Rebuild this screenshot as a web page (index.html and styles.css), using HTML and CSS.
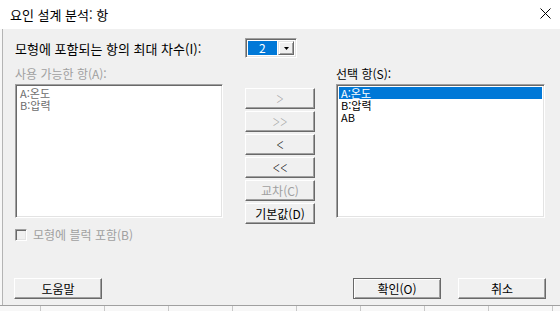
FILE: index.html
```html
<!DOCTYPE html>
<html lang="ko">
<head>
<meta charset="utf-8">
<link rel="stylesheet" href="styles.css">
</head>
<body>
<div class="dialog">
  <div class="titlebar">
    <span class="title">요인 설계 분석: 항</span>
    <svg class="close" width="11" height="11" viewBox="0 0 11 11"><path d="M0.5 0.5 L10.5 10.5 M10.5 0.5 L0.5 10.5" stroke="#000" stroke-width="1" fill="none"/></svg>
  </div>
  <div class="body">
    <div class="order-row">
      <span class="text">모형에 포함되는 항의 최대 차수(I):</span>
      <div class="combo">
        <span class="combo-value">2</span>
        <span class="combo-btn"><svg width="5" height="3" viewBox="0 0 5 3"><path d="M0 0 H5 L2.5 3 Z" fill="#000"/></svg></span>
      </div>
    </div>
    <div class="main">
      <div class="col-left">
        <div class="label disabled">사용 가능한 항(A):</div>
        <div class="listbox list-dim">
          <div class="item">A:온도</div>
          <div class="item">B:압력</div>
        </div>
        <div class="check">
          <span class="box"></span>
          <span class="disabled">모형에 블럭 포함(B)</span>
        </div>
      </div>
      <div class="col-mid">
        <div class="btn disabled"><span class="arrow">&gt;</span></div>
        <div class="btn disabled"><span class="arrow">&gt;&gt;</span></div>
        <div class="btn"><span class="arrow">&lt;</span></div>
        <div class="btn"><span class="arrow">&lt;&lt;</span></div>
        <div class="btn disabled">교차(C)</div>
        <div class="btn">기본값(D)</div>
      </div>
      <div class="col-right">
        <div class="label">선택 항(S):</div>
        <div class="listbox">
          <div class="item selected">A:온도</div>
          <div class="item">B:압력</div>
          <div class="item">AB</div>
        </div>
      </div>
    </div>
    <div class="footer">
      <div class="btn wide">도움말</div>
      <div class="spacer"></div>
      <div class="btn wide default">확인(O)</div>
      <div class="btn wide">취소</div>
    </div>
  </div>
</div>
</body>
</html>
```

FILE: styles.css
```css
html, body {
  margin: 0;
  padding: 0;
}
body {
  width: 560px;
  height: 311px;
  overflow: hidden;
  background-color: #f7f7f7;
  background-image: repeating-linear-gradient(to right, transparent 0, transparent 40px, #c8c8c8 40px, #c8c8c8 41px, transparent 41px, transparent 64px);
  font-family: "Noto Sans CJK KR", "Noto Sans", sans-serif;
  font-size: 12px;
  color: #000;
}
.dialog {
  width: 560px;
  height: 306px;
  display: flex;
  flex-direction: column;
  border-bottom: 1px solid #a0a0a0;
  box-sizing: border-box;
}
.titlebar {
  height: 29px;
  background: #fff;
  display: flex;
  align-items: center;
  padding: 0 9px 0 10px;
  flex: none;
}
.title {
  font-size: 13px;
  line-height: 15px;
  flex: 1;
  padding-bottom: 1px;
}
.close {
  display: block;
  margin-top: -2px;
}
.body {
  flex: 1;
  background: #f0f0f0;
  display: flex;
  flex-direction: column;
  padding: 9px 14px 6px 12px;
  border-left: 1px solid #b4b4b4;
  margin-left: 2px;
}
.order-row {
  display: grid;
  grid-template-columns: 230px auto;
  align-items: center;
  height: 20px;
}
.text {
  font-size: 13px;
  line-height: 15px;
  padding-top: 1px;
}
.combo {
  width: 52px;
  height: 20px;
  box-sizing: border-box;
  border: 1px solid;
  border-color: #a0a0a0 #fff #fff #a0a0a0;
  box-shadow: inset 1px 1px #696969, inset -1px -1px #e3e3e3;
  background: #fff;
  display: flex;
  padding: 2px;
}
.combo-value {
  flex: 1;
  background: #0078d7;
  color: #fff;
  line-height: 14px;
  padding-left: 11px;
  font-size: 12px;
  margin-right: 1px;
}
.combo-btn {
  width: 16px;
  box-sizing: border-box;
  background: #f0f0f0;
  border: 1px solid;
  border-color: #e3e3e3 #696969 #696969 #e3e3e3;
  box-shadow: inset 1px 1px #fff, inset -1px -1px #a0a0a0;
  display: flex;
  align-items: center;
  justify-content: center;
}
.combo-btn svg {
  display: block;
}
.main {
  display: flex;
  margin-top: 9px;
}
.col-left {
  width: 208px;
  display: flex;
  flex-direction: column;
}
.col-mid {
  width: 70px;
  margin-left: 22px;
  padding-top: 21px;
  display: flex;
  flex-direction: column;
  gap: 2px;
}
.col-right {
  width: 209px;
  margin-left: 21px;
  display: flex;
  flex-direction: column;
}
.label {
  line-height: 14px;
  height: 14px;
  margin-bottom: 3px;
}
.disabled {
  color: #a0a0a0;
}
.listbox {
  height: 134px;
  box-sizing: border-box;
  border: 1px solid;
  border-color: #a0a0a0 #fff #fff #a0a0a0;
  box-shadow: inset 1px 1px #696969, inset -1px -1px #e3e3e3;
  background: #fff;
  padding: 2px 2px 1px 2px;
}
.item {
  height: 12px;
  line-height: 12px;
  font-size: 11px;
  padding-left: 2px;
  white-space: nowrap;
}
.list-dim .item {
  color: #6d6d6d;
}
.selected {
  background: #0078d7;
  color: #fff;
}
.check {
  display: flex;
  align-items: center;
  gap: 6px;
  margin-top: 10px;
  line-height: 14px;
}
.box {
  width: 12px;
  height: 12px;
  box-sizing: border-box;
  border: 1px solid;
  border-color: #a0a0a0 #fff #fff #a0a0a0;
  box-shadow: inset 1px 1px #696969, inset -1px -1px #e3e3e3;
  background: #f0f0f0;
}
.btn {
  height: 21px;
  box-sizing: border-box;
  border: 1px solid;
  border-color: #fff #696969 #696969 #fff;
  box-shadow: inset -1px -1px #a0a0a0;
  background: #f0f0f0;
  display: flex;
  align-items: center;
  justify-content: center;
  line-height: 14px;
  font-size: 12px;
}
.arrow {
  display: inline-block;
  font-family: "DejaVu Sans", sans-serif;
  font-size: 12px;
  font-weight: 300;
  letter-spacing: 0;
  transform: scale(0.75, 1.35);
}
.footer {
  margin-top: auto;
  display: flex;
  gap: 17px;
  margin-left: -1px;
}
.spacer {
  flex: 1;
}
.wide {
  width: 88px;
}
.default {
  border-color: #696969;
  box-shadow: inset 1px 1px #fff, inset -1px -1px #a0a0a0;
}
```
